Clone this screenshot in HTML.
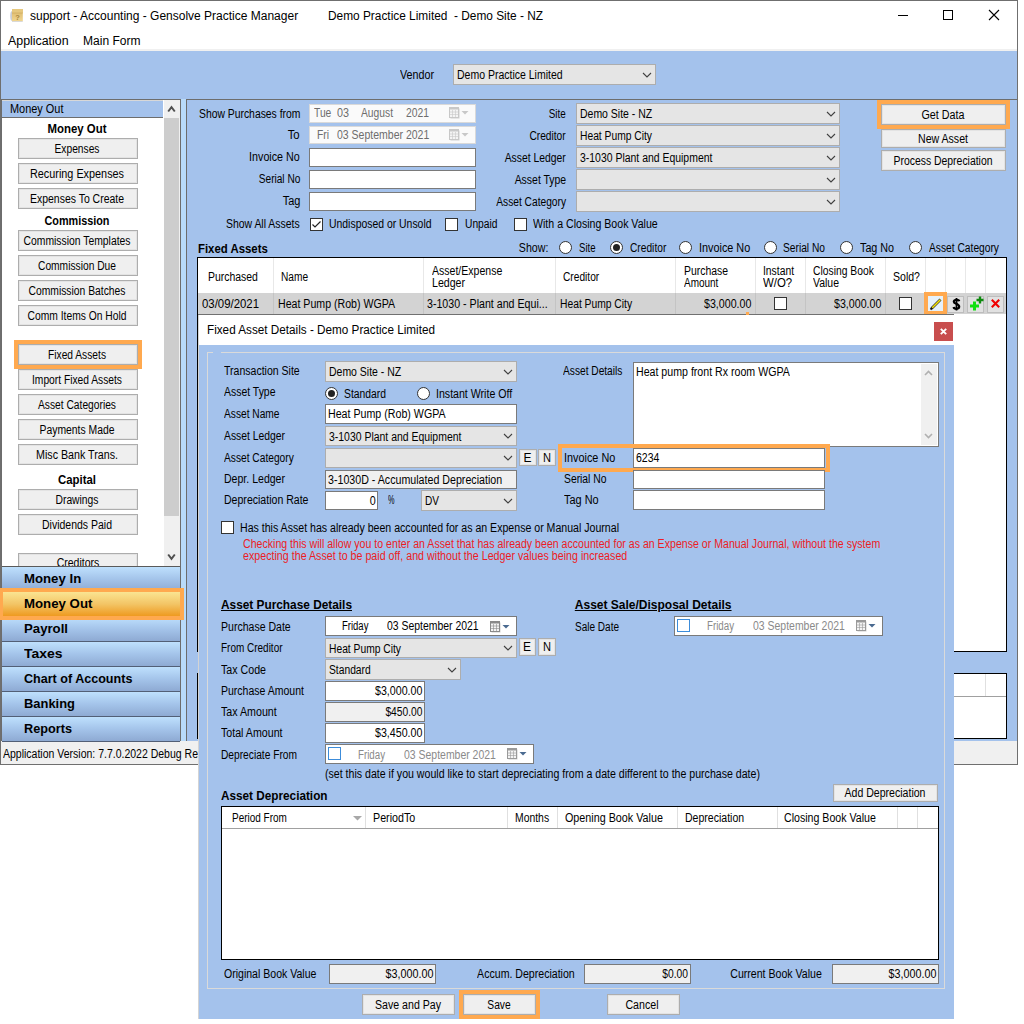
<!DOCTYPE html><html><head><meta charset="utf-8"><style>
*{box-sizing:border-box;margin:0;padding:0}
html,body{width:1024px;height:1024px;overflow:hidden;background:#fff}
body{position:relative;font-family:"Liberation Sans",sans-serif;font-size:12px;color:#000}
.a{position:absolute}
.t{position:absolute;white-space:pre}
svg{overflow:visible}
</style></head><body>
<div class="a" style="left:0px;top:0px;width:1018px;height:765px;background:#fff;border:1px solid #6F6F6F;"></div>
<svg class="a" style="left:9px;top:8px" width="16" height="16" viewBox="0 0 16 16"><defs><linearGradient id="gb" x1="0" y1="0" x2="0" y2="1"><stop offset="0" stop-color="#D9B464"/><stop offset="1" stop-color="#F0D590"/></linearGradient></defs><ellipse cx="2.8" cy="8" rx="1.6" ry="4.8" fill="#C9CDD5"/><rect x="3" y="1" width="10.8" height="12" fill="url(#gb)"/><rect x="3" y="1" width="10.8" height="4" fill="#E6C87E"/><path d="M3 5 H13.8" stroke="#C9A55A" stroke-width="0.6"/><text x="8.6" y="11.8" font-size="7.5" font-weight="bold" text-anchor="middle" fill="#A88840" font-family="Liberation Sans">?</text><rect x="3" y="13" width="10.8" height="0.8" fill="#D0D0D0"/></svg>
<div class="t" style="top:7.50px;height:16px;line-height:16px;font-size:12px;color:#000;left:30px;transform-origin:0 50%;">support - Accounting - Gensolve Practice Manager</div>
<div class="t" style="top:7.50px;height:16px;line-height:16px;font-size:12px;color:#000;left:328px;transform-origin:0 50%;transform:scaleX(0.9890);">Demo Practice Limited  - Demo Site - NZ</div>
<div class="a" style="left:898px;top:15px;width:10px;height:1px;background:#000;"></div>
<div class="a" style="left:943px;top:10px;width:10px;height:10px;border:1px solid #000;"></div>
<svg class="a" style="left:989px;top:10px" width="10" height="10" viewBox="0 0 10 10"><path d="M0 0 L10 10 M10 0 L0 10" stroke="#000" stroke-width="1.1"/></svg>
<div class="t" style="top:32.50px;height:16px;line-height:16px;font-size:12px;color:#000;left:8px;transform-origin:0 50%;transform:scaleX(1.0320);">Application</div>
<div class="t" style="top:32.50px;height:16px;line-height:16px;font-size:12px;color:#000;left:83px;transform-origin:0 50%;transform:scaleX(1.0027);">Main Form</div>
<div class="a" style="left:1px;top:49px;width:1016px;height:2px;background:#F0F0F0;"></div>
<div class="a" style="left:1px;top:51px;width:1016px;height:690px;background:#A4C2EC;"></div>
<div class="a" style="left:1px;top:741px;width:1016px;height:23px;background:#F0F0F0;"></div>
<div class="t" style="top:745.50px;height:16px;line-height:16px;font-size:12px;color:#000;left:3px;transform-origin:0 50%;transform:scaleX(0.8750);">Application Version: 7.7.0.2022 Debug Release</div>
<div class="a" style="left:0px;top:764px;width:1018px;height:1px;background:#6F6F6F;"></div>
<div class="t" style="top:66.50px;height:16px;line-height:16px;font-size:12px;color:#000;right:590px;transform-origin:100% 50%;transform:scaleX(0.8936);">Vendor</div>
<div class="a" style="left:453px;top:64px;width:203px;height:21px;background:#E5E5E5;border:1px solid #ADADAD;"></div>
<div class="t" style="top:67.00px;height:16px;line-height:16px;font-size:12px;color:#000;left:457.4px;transform-origin:0 50%;transform:scaleX(0.8750);">Demo Practice Limited</div>
<svg class="a" style="left:642.0px;top:71.5px" width="10" height="6" viewBox="0 0 10 6"><path d="M1 1 L5.0 5 L9 1" fill="none" stroke="#404040" stroke-width="1.1"/></svg>
<div class="a" style="left:1px;top:99px;width:180px;height:468px;background:#6D6D6D;"></div>
<div class="a" style="left:2px;top:100px;width:178px;height:466px;background:#fff;"></div>
<div class="a" style="left:2px;top:100px;width:161px;height:1px;background:#D8D8D8;"></div>
<div class="a" style="left:2px;top:101px;width:161px;height:16px;background:#A4C2EC;"></div>
<div class="a" style="left:2px;top:117px;width:161px;height:1px;background:#6D6D6D;"></div>
<div class="t" style="top:100.50px;height:16px;line-height:16px;font-size:12px;color:#000;left:9.5px;transform-origin:0 50%;transform:scaleX(0.9114);">Money Out</div>
<div class="a" style="left:163px;top:100px;width:17px;height:466px;background:#F0F0F0;"></div>
<div class="a" style="left:164px;top:118px;width:15px;height:398px;background:#CDCDCD;"></div>
<div class="a" style="left:163px;top:100px;width:1px;height:466px;background:#fff;"></div>
<svg class="a" style="left:167px;top:105px" width="9" height="8" viewBox="0 0 9 8"><path d="M1.2 6.5 L4.5 2.2 L7.8 6.5" fill="none" stroke="#505050" stroke-width="2"/></svg>
<svg class="a" style="left:167px;top:553px" width="9" height="8" viewBox="0 0 9 8"><path d="M1.2 1.5 L4.5 5.8 L7.8 1.5" fill="none" stroke="#505050" stroke-width="2"/></svg>
<div class="t" style="top:121.00px;height:16px;line-height:16px;font-size:12px;color:#000;font-weight:bold;left:-223px;width:600px;text-align:center;transform-origin:50% 50%;transform:scaleX(0.9516);">Money Out</div>
<div class="a" style="left:18px;top:138px;width:120px;height:21px;background:#EFEFEF;border:1px solid #ADADAD;box-shadow:inset 0 0 0 1px #E3E3E3;"></div>
<div class="t" style="top:140.50px;height:16px;line-height:16px;font-size:12px;color:#000;left:-223px;width:600px;text-align:center;transform-origin:50% 50%;transform:scaleX(0.8538);">Expenses</div>
<div class="a" style="left:18px;top:163px;width:120px;height:21px;background:#EFEFEF;border:1px solid #ADADAD;box-shadow:inset 0 0 0 1px #E3E3E3;"></div>
<div class="t" style="top:165.50px;height:16px;line-height:16px;font-size:12px;color:#000;left:-223px;width:600px;text-align:center;transform-origin:50% 50%;transform:scaleX(0.9033);">Recuring Expenses</div>
<div class="a" style="left:18px;top:188px;width:120px;height:21px;background:#EFEFEF;border:1px solid #ADADAD;box-shadow:inset 0 0 0 1px #E3E3E3;"></div>
<div class="t" style="top:190.50px;height:16px;line-height:16px;font-size:12px;color:#000;left:-223px;width:600px;text-align:center;transform-origin:50% 50%;transform:scaleX(0.8716);">Expenses To Create</div>
<div class="t" style="top:213.00px;height:16px;line-height:16px;font-size:12px;color:#000;font-weight:bold;left:-223px;width:600px;text-align:center;transform-origin:50% 50%;transform:scaleX(0.9026);">Commission</div>
<div class="a" style="left:18px;top:230px;width:120px;height:21px;background:#EFEFEF;border:1px solid #ADADAD;box-shadow:inset 0 0 0 1px #E3E3E3;"></div>
<div class="t" style="top:232.50px;height:16px;line-height:16px;font-size:12px;color:#000;left:-223px;width:600px;text-align:center;transform-origin:50% 50%;transform:scaleX(0.8641);">Commission Templates</div>
<div class="a" style="left:18px;top:255px;width:120px;height:21px;background:#EFEFEF;border:1px solid #ADADAD;box-shadow:inset 0 0 0 1px #E3E3E3;"></div>
<div class="t" style="top:257.50px;height:16px;line-height:16px;font-size:12px;color:#000;left:-223px;width:600px;text-align:center;transform-origin:50% 50%;transform:scaleX(0.8538);">Commission Due</div>
<div class="a" style="left:18px;top:280px;width:120px;height:21px;background:#EFEFEF;border:1px solid #ADADAD;box-shadow:inset 0 0 0 1px #E3E3E3;"></div>
<div class="t" style="top:282.50px;height:16px;line-height:16px;font-size:12px;color:#000;left:-223px;width:600px;text-align:center;transform-origin:50% 50%;transform:scaleX(0.8605);">Commission Batches</div>
<div class="a" style="left:18px;top:305px;width:120px;height:21px;background:#EFEFEF;border:1px solid #ADADAD;box-shadow:inset 0 0 0 1px #E3E3E3;"></div>
<div class="t" style="top:307.50px;height:16px;line-height:16px;font-size:12px;color:#000;left:-223px;width:600px;text-align:center;transform-origin:50% 50%;transform:scaleX(0.8582);">Comm Items On Hold</div>
<div class="a" style="left:18px;top:344px;width:120px;height:21px;background:#EFEFEF;border:1px solid #ADADAD;box-shadow:inset 0 0 0 1px #E3E3E3;"></div>
<div class="t" style="top:346.50px;height:16px;line-height:16px;font-size:12px;color:#000;left:-223px;width:600px;text-align:center;transform-origin:50% 50%;transform:scaleX(0.8525);">Fixed Assets</div>
<div class="a" style="left:18px;top:369px;width:120px;height:21px;background:#EFEFEF;border:1px solid #ADADAD;box-shadow:inset 0 0 0 1px #E3E3E3;"></div>
<div class="t" style="top:371.50px;height:16px;line-height:16px;font-size:12px;color:#000;left:-223px;width:600px;text-align:center;transform-origin:50% 50%;transform:scaleX(0.8541);">Import Fixed Assets</div>
<div class="a" style="left:18px;top:394px;width:120px;height:21px;background:#EFEFEF;border:1px solid #ADADAD;box-shadow:inset 0 0 0 1px #E3E3E3;"></div>
<div class="t" style="top:396.50px;height:16px;line-height:16px;font-size:12px;color:#000;left:-223px;width:600px;text-align:center;transform-origin:50% 50%;transform:scaleX(0.8535);">Asset Categories</div>
<div class="a" style="left:18px;top:419px;width:120px;height:21px;background:#EFEFEF;border:1px solid #ADADAD;box-shadow:inset 0 0 0 1px #E3E3E3;"></div>
<div class="t" style="top:421.50px;height:16px;line-height:16px;font-size:12px;color:#000;left:-223px;width:600px;text-align:center;transform-origin:50% 50%;transform:scaleX(0.8649);">Payments Made</div>
<div class="a" style="left:18px;top:444px;width:120px;height:21px;background:#EFEFEF;border:1px solid #ADADAD;box-shadow:inset 0 0 0 1px #E3E3E3;"></div>
<div class="t" style="top:446.50px;height:16px;line-height:16px;font-size:12px;color:#000;left:-223px;width:600px;text-align:center;transform-origin:50% 50%;transform:scaleX(0.8910);">Misc Bank Trans.</div>
<div class="a" style="left:14px;top:340px;width:128px;height:29px;border:4px solid #FFA94F;"></div>
<div class="t" style="top:471.50px;height:16px;line-height:16px;font-size:12px;color:#000;font-weight:bold;left:-223px;width:600px;text-align:center;transform-origin:50% 50%;transform:scaleX(0.9496);">Capital</div>
<div class="a" style="left:18px;top:489px;width:120px;height:21px;background:#EFEFEF;border:1px solid #ADADAD;box-shadow:inset 0 0 0 1px #E3E3E3;"></div>
<div class="t" style="top:491.50px;height:16px;line-height:16px;font-size:12px;color:#000;left:-223px;width:600px;text-align:center;transform-origin:50% 50%;transform:scaleX(0.8597);">Drawings</div>
<div class="a" style="left:18px;top:514px;width:120px;height:21px;background:#EFEFEF;border:1px solid #ADADAD;box-shadow:inset 0 0 0 1px #E3E3E3;"></div>
<div class="t" style="top:516.50px;height:16px;line-height:16px;font-size:12px;color:#000;left:-223px;width:600px;text-align:center;transform-origin:50% 50%;transform:scaleX(0.8745);">Dividends Paid</div>
<div class="a" style="left:2px;top:540px;width:161px;height:26px;overflow:hidden">
<div class="a" style="left:16px;top:13px;width:120px;height:21px;background:#EFEFEF;border:1px solid #ADADAD;box-shadow:inset 0 0 0 1px #E3E3E3;"></div>
<div class="t" style="left:16px;top:15px;width:120px;text-align:center;height:16px;line-height:16px;transform:scaleX(0.875)">Creditors</div>
</div>
<div class="a" style="left:1px;top:566px;width:180px;height:1px;background:#5A5A5A;"></div>
<div class="a" style="left:2px;top:567px;width:178px;height:24px;background:linear-gradient(#BEE0FD,#A4C4EA 50%,#8EAAD3);"></div>
<div class="a" style="left:2px;top:591px;width:178px;height:1px;background:#525F76;"></div>
<div class="t" style="top:570.50px;height:16px;line-height:16px;font-size:13.5px;color:#000;font-weight:bold;left:24px;transform-origin:0 50%;transform:scaleX(0.9775);">Money In</div>
<div class="a" style="left:2px;top:592px;width:178px;height:24px;background:linear-gradient(#FAE492,#F3C566 50%,#EE9A20);"></div>
<div class="a" style="left:2px;top:616px;width:178px;height:1px;background:#525F76;"></div>
<div class="t" style="top:595.50px;height:16px;line-height:16px;font-size:13.5px;color:#000;font-weight:bold;left:24px;transform-origin:0 50%;transform:scaleX(0.9806);">Money Out</div>
<div class="a" style="left:2px;top:617px;width:178px;height:24px;background:linear-gradient(#BEE0FD,#A4C4EA 50%,#8EAAD3);"></div>
<div class="a" style="left:2px;top:641px;width:178px;height:1px;background:#525F76;"></div>
<div class="t" style="top:620.50px;height:16px;line-height:16px;font-size:13.5px;color:#000;font-weight:bold;left:24px;transform-origin:0 50%;transform:scaleX(0.9771);">Payroll</div>
<div class="a" style="left:2px;top:642px;width:178px;height:24px;background:linear-gradient(#BEE0FD,#A4C4EA 50%,#8EAAD3);"></div>
<div class="a" style="left:2px;top:666px;width:178px;height:1px;background:#525F76;"></div>
<div class="t" style="top:645.50px;height:16px;line-height:16px;font-size:13.5px;color:#000;font-weight:bold;left:24px;transform-origin:0 50%;transform:scaleX(1.0327);">Taxes</div>
<div class="a" style="left:2px;top:667px;width:178px;height:24px;background:linear-gradient(#BEE0FD,#A4C4EA 50%,#8EAAD3);"></div>
<div class="a" style="left:2px;top:691px;width:178px;height:1px;background:#525F76;"></div>
<div class="t" style="top:670.50px;height:16px;line-height:16px;font-size:13.5px;color:#000;font-weight:bold;left:24px;transform-origin:0 50%;transform:scaleX(0.9303);">Chart of Accounts</div>
<div class="a" style="left:2px;top:692px;width:178px;height:24px;background:linear-gradient(#BEE0FD,#A4C4EA 50%,#8EAAD3);"></div>
<div class="a" style="left:2px;top:716px;width:178px;height:1px;background:#525F76;"></div>
<div class="t" style="top:695.50px;height:16px;line-height:16px;font-size:13.5px;color:#000;font-weight:bold;left:24px;transform-origin:0 50%;transform:scaleX(0.9575);">Banking</div>
<div class="a" style="left:2px;top:717px;width:178px;height:24px;background:linear-gradient(#BEE0FD,#A4C4EA 50%,#8EAAD3);"></div>
<div class="a" style="left:2px;top:741px;width:178px;height:1px;background:#525F76;"></div>
<div class="t" style="top:720.50px;height:16px;line-height:16px;font-size:13.5px;color:#000;font-weight:bold;left:24px;transform-origin:0 50%;transform:scaleX(0.9409);">Reports</div>
<div class="a" style="left:180px;top:99px;width:1px;height:642px;background:#6D6D6D;"></div>
<div class="a" style="left:1px;top:99px;width:1px;height:642px;background:#6D6D6D;"></div>
<div class="a" style="left:181px;top:99px;width:5px;height:642px;background:#B9DBFA;"></div>
<div class="a" style="left:186px;top:99px;width:1px;height:642px;background:#6D6D6D;"></div>
<div class="a" style="left:186px;top:99px;width:831px;height:1px;background:#6D6D6D;"></div>
<div class="a" style="left:0px;top:588px;width:184px;height:32px;border:4px solid #FFA94F;border-left-width:3px;"></div>
<div class="t" style="top:105.50px;height:16px;line-height:16px;font-size:12px;color:#000;right:724px;transform-origin:100% 50%;transform:scaleX(0.8638);">Show Purchases from</div>
<div class="t" style="top:126.50px;height:16px;line-height:16px;font-size:12px;color:#000;right:724px;transform-origin:100% 50%;transform:scaleX(0.9458);">To</div>
<div class="t" style="top:148.50px;height:16px;line-height:16px;font-size:12px;color:#000;right:724px;transform-origin:100% 50%;transform:scaleX(0.8924);">Invoice No</div>
<div class="t" style="top:170.50px;height:16px;line-height:16px;font-size:12px;color:#000;right:724px;transform-origin:100% 50%;transform:scaleX(0.8428);">Serial No</div>
<div class="t" style="top:192.50px;height:16px;line-height:16px;font-size:12px;color:#000;right:724px;transform-origin:100% 50%;transform:scaleX(0.9143);">Tag</div>
<div class="t" style="top:215.50px;height:16px;line-height:16px;font-size:12px;color:#000;right:724px;transform-origin:100% 50%;transform:scaleX(0.8711);">Show All Assets</div>
<div class="a" style="left:309px;top:104px;width:167px;height:19px;background:#FAFAFA;border:1px solid #D9D9D9;"></div>
<div class="t" style="top:104.50px;height:16px;line-height:16px;font-size:12px;color:#6D6D6D;left:314px;transform-origin:0 50%;transform:scaleX(0.8550);">Tue</div>
<div class="t" style="top:104.50px;height:16px;line-height:16px;font-size:12px;color:#6D6D6D;left:337px;transform-origin:0 50%;transform:scaleX(0.8982);">03</div>
<div class="t" style="top:104.50px;height:16px;line-height:16px;font-size:12px;color:#6D6D6D;left:361px;transform-origin:0 50%;transform:scaleX(0.8565);">August</div>
<div class="t" style="top:104.50px;height:16px;line-height:16px;font-size:12px;color:#6D6D6D;left:406px;transform-origin:0 50%;transform:scaleX(0.8613);">2021</div>
<svg class="a" style="left:449px;top:107px" width="22" height="12" viewBox="0 0 22 12"><rect x="1.5" y="1.5" width="9" height="10" fill="#D0D0D0"/><rect x="0.5" y="0.5" width="9" height="10" fill="#F4F4F4" stroke="#C8C8C8"/><rect x="0.5" y="0.5" width="9" height="2" fill="#C8C8C8"/><path d="M0.5 5 H9.5 M0.5 7.5 H9.5 M3.5 3 V10.5 M6.5 3 V10.5" stroke="#C8C8C8" stroke-width="0.6"/><path d="M12.5 4 L19.5 4 L16 7.5 Z" fill="#C8C8C8"/></svg>
<div class="a" style="left:309px;top:126px;width:167px;height:18px;background:#FAFAFA;border:1px solid #D9D9D9;"></div>
<div class="t" style="top:126.50px;height:16px;line-height:16px;font-size:12px;color:#6D6D6D;left:317px;transform-origin:0 50%;transform:scaleX(0.8571);">Fri</div>
<div class="t" style="top:126.50px;height:16px;line-height:16px;font-size:12px;color:#6D6D6D;left:337px;transform-origin:0 50%;transform:scaleX(0.8755);">03 September 2021</div>
<svg class="a" style="left:449px;top:129px" width="22" height="12" viewBox="0 0 22 12"><rect x="1.5" y="1.5" width="9" height="10" fill="#D0D0D0"/><rect x="0.5" y="0.5" width="9" height="10" fill="#F4F4F4" stroke="#C8C8C8"/><rect x="0.5" y="0.5" width="9" height="2" fill="#C8C8C8"/><path d="M0.5 5 H9.5 M0.5 7.5 H9.5 M3.5 3 V10.5 M6.5 3 V10.5" stroke="#C8C8C8" stroke-width="0.6"/><path d="M12.5 4 L19.5 4 L16 7.5 Z" fill="#C8C8C8"/></svg>
<div class="a" style="left:309px;top:148px;width:167px;height:19px;background:#fff;border:1px solid #7A7A7A;"></div>
<div class="a" style="left:309px;top:170px;width:167px;height:19px;background:#fff;border:1px solid #7A7A7A;"></div>
<div class="a" style="left:309px;top:192px;width:167px;height:19px;background:#fff;border:1px solid #7A7A7A;"></div>
<div class="a" style="left:310px;top:218px;width:13px;height:13px;background:#fff;border:1px solid #333;"></div>
<svg class="a" style="left:310px;top:218px" width="13" height="13" viewBox="0 0 13 13"><path d="M2.5 6.5 L5 9 L10.5 3.5" fill="none" stroke="#222" stroke-width="1.2"/></svg>
<div class="t" style="top:215.50px;height:16px;line-height:16px;font-size:12px;color:#000;left:328.7px;transform-origin:0 50%;transform:scaleX(0.8681);">Undisposed or Unsold</div>
<div class="a" style="left:445px;top:218px;width:13px;height:13px;background:#fff;border:1px solid #333;"></div>
<div class="t" style="top:215.50px;height:16px;line-height:16px;font-size:12px;color:#000;left:464.6px;transform-origin:0 50%;transform:scaleX(0.8546);">Unpaid</div>
<div class="a" style="left:514px;top:218px;width:13px;height:13px;background:#fff;border:1px solid #333;"></div>
<div class="t" style="top:215.50px;height:16px;line-height:16px;font-size:12px;color:#000;left:533.2px;transform-origin:0 50%;transform:scaleX(0.8832);">With a Closing Book Value</div>
<div class="t" style="top:105.50px;height:16px;line-height:16px;font-size:12px;color:#000;right:458px;transform-origin:100% 50%;transform:scaleX(0.8218);">Site</div>
<div class="t" style="top:127.50px;height:16px;line-height:16px;font-size:12px;color:#000;right:458px;transform-origin:100% 50%;transform:scaleX(0.8504);">Creditor</div>
<div class="t" style="top:149.50px;height:16px;line-height:16px;font-size:12px;color:#000;right:458px;transform-origin:100% 50%;transform:scaleX(0.8626);">Asset Ledger</div>
<div class="t" style="top:171.50px;height:16px;line-height:16px;font-size:12px;color:#000;right:458px;transform-origin:100% 50%;transform:scaleX(0.8706);">Asset Type</div>
<div class="t" style="top:193.50px;height:16px;line-height:16px;font-size:12px;color:#000;right:458px;transform-origin:100% 50%;transform:scaleX(0.8507);">Asset Category</div>
<div class="a" style="left:576px;top:103px;width:264px;height:21px;background:#E5E5E5;border:1px solid #ADADAD;"></div>
<div class="t" style="top:106.00px;height:16px;line-height:16px;font-size:12px;color:#000;left:580.4px;transform-origin:0 50%;transform:scaleX(0.8732);">Demo Site - NZ</div>
<svg class="a" style="left:826.0px;top:110.5px" width="10" height="6" viewBox="0 0 10 6"><path d="M1 1 L5.0 5 L9 1" fill="none" stroke="#404040" stroke-width="1.1"/></svg>
<div class="a" style="left:576px;top:125px;width:264px;height:21px;background:#E5E5E5;border:1px solid #ADADAD;"></div>
<div class="t" style="top:128.00px;height:16px;line-height:16px;font-size:12px;color:#000;left:580.4px;transform-origin:0 50%;transform:scaleX(0.8568);">Heat Pump City</div>
<svg class="a" style="left:826.0px;top:132.5px" width="10" height="6" viewBox="0 0 10 6"><path d="M1 1 L5.0 5 L9 1" fill="none" stroke="#404040" stroke-width="1.1"/></svg>
<div class="a" style="left:576px;top:147px;width:264px;height:21px;background:#E5E5E5;border:1px solid #ADADAD;"></div>
<div class="t" style="top:150.00px;height:16px;line-height:16px;font-size:12px;color:#000;left:580.4px;transform-origin:0 50%;transform:scaleX(0.8704);">3-1030 Plant and Equipment</div>
<svg class="a" style="left:826.0px;top:154.5px" width="10" height="6" viewBox="0 0 10 6"><path d="M1 1 L5.0 5 L9 1" fill="none" stroke="#404040" stroke-width="1.1"/></svg>
<div class="a" style="left:576px;top:169px;width:264px;height:21px;background:#E5E5E5;border:1px solid #ADADAD;"></div>
<svg class="a" style="left:826.0px;top:176.5px" width="10" height="6" viewBox="0 0 10 6"><path d="M1 1 L5.0 5 L9 1" fill="none" stroke="#404040" stroke-width="1.1"/></svg>
<div class="a" style="left:576px;top:191px;width:264px;height:21px;background:#E5E5E5;border:1px solid #ADADAD;"></div>
<svg class="a" style="left:826.0px;top:198.5px" width="10" height="6" viewBox="0 0 10 6"><path d="M1 1 L5.0 5 L9 1" fill="none" stroke="#404040" stroke-width="1.1"/></svg>
<div class="a" style="left:881px;top:104px;width:125px;height:21px;background:#EFEFEF;border:1px solid #ADADAD;box-shadow:inset 0 0 0 1px #E3E3E3;"></div>
<div class="t" style="top:106.50px;height:16px;line-height:16px;font-size:12px;color:#000;left:643.0px;width:600px;text-align:center;transform-origin:50% 50%;transform:scaleX(0.8953);">Get Data</div>
<div class="a" style="left:877px;top:100px;width:133px;height:29px;border:4px solid #FFA94F;"></div>
<div class="a" style="left:881px;top:129px;width:125px;height:19px;background:#EFEFEF;border:1px solid #ADADAD;box-shadow:inset 0 0 0 1px #E3E3E3;"></div>
<div class="t" style="top:130.50px;height:16px;line-height:16px;font-size:12px;color:#000;left:643.0px;width:600px;text-align:center;transform-origin:50% 50%;transform:scaleX(0.8818);">New Asset</div>
<div class="a" style="left:881px;top:150px;width:125px;height:21px;background:#EFEFEF;border:1px solid #ADADAD;box-shadow:inset 0 0 0 1px #E3E3E3;"></div>
<div class="t" style="top:152.50px;height:16px;line-height:16px;font-size:12px;color:#000;left:643.0px;width:600px;text-align:center;transform-origin:50% 50%;transform:scaleX(0.8679);">Process Depreciation</div>
<div class="t" style="top:240.50px;height:16px;line-height:16px;font-size:12px;color:#000;font-weight:bold;left:197.7px;transform-origin:0 50%;transform:scaleX(0.9485);">Fixed Assets</div>
<div class="t" style="top:240.00px;height:16px;line-height:16px;font-size:12px;color:#000;right:475.29999999999995px;transform-origin:100% 50%;transform:scaleX(0.8843);">Show:</div>
<svg class="a" style="left:559px;top:241px" width="13" height="13" viewBox="0 0 13 13"><circle cx="6.5" cy="6.5" r="6" fill="#fff" stroke="#333" stroke-width="1"/></svg>
<div class="t" style="top:240.00px;height:16px;line-height:16px;font-size:12px;color:#000;left:578.5px;transform-origin:0 50%;transform:scaleX(0.7976);">Site</div>
<svg class="a" style="left:610px;top:241px" width="13" height="13" viewBox="0 0 13 13"><circle cx="6.5" cy="6.5" r="6" fill="#fff" stroke="#333" stroke-width="1"/><circle cx="6.5" cy="6.5" r="3.5" fill="#222"/></svg>
<div class="t" style="top:240.00px;height:16px;line-height:16px;font-size:12px;color:#000;left:629.5px;transform-origin:0 50%;transform:scaleX(0.8504);">Creditor</div>
<svg class="a" style="left:679px;top:241px" width="13" height="13" viewBox="0 0 13 13"><circle cx="6.5" cy="6.5" r="6" fill="#fff" stroke="#333" stroke-width="1"/></svg>
<div class="t" style="top:240.00px;height:16px;line-height:16px;font-size:12px;color:#000;left:698.5px;transform-origin:0 50%;transform:scaleX(0.9029);">Invoice No</div>
<svg class="a" style="left:763.6px;top:241px" width="13" height="13" viewBox="0 0 13 13"><circle cx="6.5" cy="6.5" r="6" fill="#fff" stroke="#333" stroke-width="1"/></svg>
<div class="t" style="top:240.00px;height:16px;line-height:16px;font-size:12px;color:#000;left:783.1px;transform-origin:0 50%;transform:scaleX(0.8509);">Serial No</div>
<svg class="a" style="left:840px;top:241px" width="13" height="13" viewBox="0 0 13 13"><circle cx="6.5" cy="6.5" r="6" fill="#fff" stroke="#333" stroke-width="1"/></svg>
<div class="t" style="top:240.00px;height:16px;line-height:16px;font-size:12px;color:#000;left:859.5px;transform-origin:0 50%;transform:scaleX(0.8966);">Tag No</div>
<svg class="a" style="left:909px;top:241px" width="13" height="13" viewBox="0 0 13 13"><circle cx="6.5" cy="6.5" r="6" fill="#fff" stroke="#333" stroke-width="1"/></svg>
<div class="t" style="top:240.00px;height:16px;line-height:16px;font-size:12px;color:#000;left:928.5px;transform-origin:0 50%;transform:scaleX(0.8532);">Asset Category</div>
<div class="a" style="left:197px;top:257px;width:810px;height:395px;background:#fff;border:1px solid #000;"></div>
<div class="a" style="left:197px;top:673px;width:810px;height:66px;background:#fff;border:1px solid #000;"></div>
<div class="a" style="left:198px;top:696px;width:808px;height:1px;background:#A0A0A0;"></div>
<div class="a" style="left:985px;top:674px;width:1px;height:22px;background:#E0E0E0;"></div>
<div class="a" style="left:273px;top:258px;width:1px;height:35px;background:#E8E8E8;"></div>
<div class="a" style="left:423px;top:258px;width:1px;height:35px;background:#E8E8E8;"></div>
<div class="a" style="left:555px;top:258px;width:1px;height:35px;background:#E8E8E8;"></div>
<div class="a" style="left:675px;top:258px;width:1px;height:35px;background:#E8E8E8;"></div>
<div class="a" style="left:755px;top:258px;width:1px;height:35px;background:#E8E8E8;"></div>
<div class="a" style="left:805px;top:258px;width:1px;height:35px;background:#E8E8E8;"></div>
<div class="a" style="left:885px;top:258px;width:1px;height:35px;background:#E8E8E8;"></div>
<div class="a" style="left:925px;top:258px;width:1px;height:35px;background:#E8E8E8;"></div>
<div class="a" style="left:945px;top:258px;width:1px;height:35px;background:#E8E8E8;"></div>
<div class="a" style="left:965px;top:258px;width:1px;height:35px;background:#E8E8E8;"></div>
<div class="a" style="left:985px;top:258px;width:1px;height:35px;background:#E8E8E8;"></div>
<div class="t" style="top:268.50px;height:16px;line-height:16px;font-size:12px;color:#000;left:207.6px;transform-origin:0 50%;transform:scaleX(0.8697);">Purchased</div>
<div class="t" style="top:268.50px;height:16px;line-height:16px;font-size:12px;color:#000;left:281.4px;transform-origin:0 50%;transform:scaleX(0.8465);">Name</div>
<div class="t" style="top:262.50px;height:16px;line-height:16px;font-size:12px;color:#000;left:431.6px;transform-origin:0 50%;transform:scaleX(0.8782);">Asset/Expense</div>
<div class="t" style="top:275.00px;height:16px;line-height:16px;font-size:12px;color:#000;left:431.6px;transform-origin:0 50%;transform:scaleX(0.8829);">Ledger</div>
<div class="t" style="top:268.50px;height:16px;line-height:16px;font-size:12px;color:#000;left:563px;transform-origin:0 50%;transform:scaleX(0.8480);">Creditor</div>
<div class="t" style="top:262.50px;height:16px;line-height:16px;font-size:12px;color:#000;left:683.6px;transform-origin:0 50%;transform:scaleX(0.8678);">Purchase</div>
<div class="t" style="top:275.00px;height:16px;line-height:16px;font-size:12px;color:#000;left:683.6px;transform-origin:0 50%;transform:scaleX(0.8317);">Amount</div>
<div class="t" style="top:262.50px;height:16px;line-height:16px;font-size:12px;color:#000;left:763.4px;transform-origin:0 50%;transform:scaleX(0.8604);">Instant</div>
<div class="t" style="top:275.00px;height:16px;line-height:16px;font-size:12px;color:#000;left:763.4px;transform-origin:0 50%;transform:scaleX(0.9520);">W/O?</div>
<div class="t" style="top:262.50px;height:16px;line-height:16px;font-size:12px;color:#000;left:812.7px;transform-origin:0 50%;transform:scaleX(0.8597);">Closing Book</div>
<div class="t" style="top:275.00px;height:16px;line-height:16px;font-size:12px;color:#000;left:812.7px;transform-origin:0 50%;transform:scaleX(0.8721);">Value</div>
<div class="t" style="top:268.50px;height:16px;line-height:16px;font-size:12px;color:#000;left:893px;transform-origin:0 50%;transform:scaleX(0.8794);">Sold?</div>
<div class="a" style="left:198px;top:293px;width:808px;height:21px;background:#D3D3D3;"></div>
<div class="a" style="left:273px;top:293px;width:1px;height:21px;background:#C4C4C4;"></div>
<div class="a" style="left:423px;top:293px;width:1px;height:21px;background:#C4C4C4;"></div>
<div class="a" style="left:555px;top:293px;width:1px;height:21px;background:#C4C4C4;"></div>
<div class="a" style="left:675px;top:293px;width:1px;height:21px;background:#C4C4C4;"></div>
<div class="a" style="left:755px;top:293px;width:1px;height:21px;background:#C4C4C4;"></div>
<div class="a" style="left:805px;top:293px;width:1px;height:21px;background:#C4C4C4;"></div>
<div class="a" style="left:885px;top:293px;width:1px;height:21px;background:#C4C4C4;"></div>
<div class="a" style="left:925px;top:293px;width:1px;height:21px;background:#C4C4C4;"></div>
<div class="t" style="top:295.50px;height:16px;line-height:16px;font-size:12px;color:#000;left:202.3px;transform-origin:0 50%;transform:scaleX(0.9490);">03/09/2021</div>
<div class="t" style="top:295.50px;height:16px;line-height:16px;font-size:12px;color:#000;left:277.6px;transform-origin:0 50%;transform:scaleX(0.8839);">Heat Pump (Rob) WGPA</div>
<div class="t" style="top:295.50px;height:16px;line-height:16px;font-size:12px;color:#000;left:427px;transform-origin:0 50%;transform:scaleX(0.8862);">3-1030 - Plant and Equi...</div>
<div class="t" style="top:295.50px;height:16px;line-height:16px;font-size:12px;color:#000;left:559.5px;transform-origin:0 50%;transform:scaleX(0.8580);">Heat Pump City</div>
<div class="t" style="top:295.50px;height:16px;line-height:16px;font-size:12px;color:#000;right:272.5px;transform-origin:100% 50%;transform:scaleX(0.8878);">$3,000.00</div>
<div class="t" style="top:295.50px;height:16px;line-height:16px;font-size:12px;color:#000;right:143px;transform-origin:100% 50%;transform:scaleX(0.8878);">$3,000.00</div>
<div class="a" style="left:774px;top:297px;width:13px;height:13px;background:#fff;border:1px solid #333;"></div>
<div class="a" style="left:899px;top:297px;width:13px;height:13px;background:#fff;border:1px solid #333;"></div>
<div class="a" style="left:925px;top:293px;width:21px;height:21px;background:#E5F1FB;"></div>
<svg class="a" style="left:929px;top:297px" width="14" height="14" viewBox="0 0 14 14"><path d="M2.5 11.5 L11.5 2.5" stroke="#3A3A3A" stroke-width="2.8"/><path d="M3 11 L11.3 2.7" stroke="#F5E400" stroke-width="1.5"/><path d="M1.5 12.5 L3.2 10.8" stroke="#111" stroke-width="1.8"/></svg>
<div class="a" style="left:924px;top:292px;width:23px;height:23px;border:4px solid #FFA94F;"></div>
<div class="a" style="left:947px;top:296px;width:17px;height:17px;background:#E1E1E1;border:1px solid #BDBDBD;"></div>
<div class="a" style="left:967px;top:296px;width:17px;height:17px;background:#E1E1E1;border:1px solid #BDBDBD;"></div>
<div class="a" style="left:987px;top:296px;width:17px;height:17px;background:#E1E1E1;border:1px solid #BDBDBD;"></div>
<svg class="a" style="left:952px;top:298px" width="9" height="13" viewBox="0 0 9 13"><path d="M7.2 3.2 C7 2.2 6 1.8 4.5 1.8 C2.8 1.8 1.8 2.6 1.8 3.8 C1.8 6 7.2 5.6 7.2 8.6 C7.2 10 6 10.8 4.5 10.8 C2.8 10.8 1.8 10 1.6 9" fill="none" stroke="#000" stroke-width="2.2"/><path d="M4.5 0 V12.5" stroke="#000" stroke-width="1.8"/></svg>
<svg class="a" style="left:969px;top:296px" width="16" height="15" viewBox="0 0 16 15"><path d="M5.5 5.5 V14.5 M1 10 H10" stroke="#11E011" stroke-width="3"/><path d="M11 0.5 V7.5 M7.5 4 H14.5" stroke="#0E8A0E" stroke-width="2.4"/></svg>
<svg class="a" style="left:991px;top:299px" width="9" height="9" viewBox="0 0 9 9"><path d="M0.8 0.8 L8.2 8.2 M8.2 0.8 L0.8 8.2" stroke="#F00000" stroke-width="2.1"/></svg>
<div class="a" style="left:199px;top:345px;width:755px;height:674px;background:#A4C2EC;"></div>
<div class="a" style="left:199px;top:315px;width:755px;height:30px;background:#fff;"></div>
<div class="a" style="left:198px;top:314px;width:756px;height:1px;background:#707070;"></div>
<div class="a" style="left:198px;top:315px;width:1px;height:704px;background:#D4D4D4;"></div>
<div class="t" style="top:321.50px;height:16px;line-height:16px;font-size:12px;color:#000;left:207px;transform-origin:0 50%;transform:scaleX(0.9768);">Fixed Asset Details - Demo Practice Limited</div>
<div class="a" style="left:934px;top:322px;width:19px;height:19px;background:#C84E4E;"></div>
<svg class="a" style="left:940px;top:328px" width="7" height="7" viewBox="0 0 7 7"><path d="M0.8 0.8 L6.2 6.2 M6.2 0.8 L0.8 6.2" stroke="#fff" stroke-width="1.9"/></svg>
<div class="a" style="left:207px;top:352px;width:738px;height:637px;border:1px solid #DADADA;"></div>
<div class="a" style="left:213px;top:351px;width:8px;height:3px;background:#A4C2EC;"></div>
<div class="t" style="top:363.00px;height:16px;line-height:16px;font-size:12px;color:#000;left:223.5px;transform-origin:0 50%;transform:scaleX(0.8775);">Transaction Site</div>
<div class="t" style="top:384.00px;height:16px;line-height:16px;font-size:12px;color:#000;left:223.5px;transform-origin:0 50%;transform:scaleX(0.8706);">Asset Type</div>
<div class="t" style="top:406.00px;height:16px;line-height:16px;font-size:12px;color:#000;left:223.5px;transform-origin:0 50%;transform:scaleX(0.8492);">Asset Name</div>
<div class="t" style="top:427.50px;height:16px;line-height:16px;font-size:12px;color:#000;left:223.5px;transform-origin:0 50%;transform:scaleX(0.8626);">Asset Ledger</div>
<div class="t" style="top:449.50px;height:16px;line-height:16px;font-size:12px;color:#000;left:223.5px;transform-origin:0 50%;transform:scaleX(0.8507);">Asset Category</div>
<div class="t" style="top:470.50px;height:16px;line-height:16px;font-size:12px;color:#000;left:223.5px;transform-origin:0 50%;transform:scaleX(0.8791);">Depr. Ledger</div>
<div class="t" style="top:491.50px;height:16px;line-height:16px;font-size:12px;color:#000;left:223.5px;transform-origin:0 50%;transform:scaleX(0.8796);">Depreciation Rate</div>
<div class="a" style="left:325px;top:361px;width:192px;height:21px;background:#E5E5E5;border:1px solid #ADADAD;"></div>
<div class="t" style="top:364.00px;height:16px;line-height:16px;font-size:12px;color:#000;left:329.4px;transform-origin:0 50%;transform:scaleX(0.8732);">Demo Site - NZ</div>
<svg class="a" style="left:503.0px;top:368.5px" width="10" height="6" viewBox="0 0 10 6"><path d="M1 1 L5.0 5 L9 1" fill="none" stroke="#404040" stroke-width="1.1"/></svg>
<svg class="a" style="left:325px;top:387px" width="13" height="13" viewBox="0 0 13 13"><circle cx="6.5" cy="6.5" r="6" fill="#fff" stroke="#333" stroke-width="1"/><circle cx="6.5" cy="6.5" r="3.5" fill="#222"/></svg>
<div class="t" style="top:385.50px;height:16px;line-height:16px;font-size:12px;color:#000;left:344.1px;transform-origin:0 50%;transform:scaleX(0.8624);">Standard</div>
<svg class="a" style="left:417px;top:387px" width="13" height="13" viewBox="0 0 13 13"><circle cx="6.5" cy="6.5" r="6" fill="#fff" stroke="#333" stroke-width="1"/></svg>
<div class="t" style="top:385.50px;height:16px;line-height:16px;font-size:12px;color:#000;left:436px;transform-origin:0 50%;transform:scaleX(0.8833);">Instant Write Off</div>
<div class="a" style="left:325px;top:404px;width:192px;height:20px;background:#fff;border:1px solid #7A7A7A;"></div>
<div class="t" style="top:406.00px;height:16px;line-height:16px;font-size:12px;color:#000;left:328.2px;transform-origin:0 50%;transform:scaleX(0.8877);">Heat Pump (Rob) WGPA</div>
<div class="a" style="left:325px;top:426px;width:192px;height:20px;background:#E5E5E5;border:1px solid #ADADAD;"></div>
<div class="t" style="top:428.50px;height:16px;line-height:16px;font-size:12px;color:#000;left:329.4px;transform-origin:0 50%;transform:scaleX(0.8704);">3-1030 Plant and Equipment</div>
<svg class="a" style="left:503.0px;top:433.0px" width="10" height="6" viewBox="0 0 10 6"><path d="M1 1 L5.0 5 L9 1" fill="none" stroke="#404040" stroke-width="1.1"/></svg>
<div class="a" style="left:325px;top:448px;width:192px;height:20px;background:#E5E5E5;border:1px solid #ADADAD;"></div>
<svg class="a" style="left:503.0px;top:455.0px" width="10" height="6" viewBox="0 0 10 6"><path d="M1 1 L5.0 5 L9 1" fill="none" stroke="#404040" stroke-width="1.1"/></svg>
<div class="a" style="left:519px;top:449px;width:18px;height:17px;background:#EFEFEF;border:1px solid #ADADAD;box-shadow:inset 0 0 0 1px #E3E3E3;"></div>
<div class="t" style="top:449.50px;height:16px;line-height:16px;font-size:12px;color:#000;left:227.5px;width:600px;text-align:center;transform-origin:50% 50%;">E</div>
<div class="a" style="left:538px;top:449px;width:18px;height:17px;background:#EFEFEF;border:1px solid #ADADAD;box-shadow:inset 0 0 0 1px #E3E3E3;"></div>
<div class="t" style="top:449.50px;height:16px;line-height:16px;font-size:12px;color:#000;left:246.5px;width:600px;text-align:center;transform-origin:50% 50%;transform:scaleX(0.9225);">N</div>
<div class="a" style="left:325px;top:470px;width:192px;height:19px;background:#F0F0F0;border:1px solid #7A7A7A;"></div>
<div class="t" style="top:471.50px;height:16px;line-height:16px;font-size:12px;color:#000;left:328.2px;transform-origin:0 50%;transform:scaleX(0.8878);">3-1030D - Accumulated Depreciation</div>
<div class="a" style="left:325px;top:491px;width:53px;height:19px;background:#fff;border:1px solid #7A7A7A;"></div>
<div class="t" style="top:492.50px;height:16px;line-height:16px;font-size:12px;color:#000;right:648.8px;transform-origin:100% 50%;transform:scaleX(0.8972);">0</div>
<div class="t" style="top:492.00px;height:16px;line-height:16px;font-size:12px;color:#000;left:388px;transform-origin:0 50%;transform:scaleX(0.6091);">%</div>
<div class="a" style="left:421px;top:490px;width:96px;height:21px;background:#E5E5E5;border:1px solid #ADADAD;"></div>
<div class="t" style="top:493.00px;height:16px;line-height:16px;font-size:12px;color:#000;left:425.4px;transform-origin:0 50%;transform:scaleX(0.8397);">DV</div>
<svg class="a" style="left:503.0px;top:497.5px" width="10" height="6" viewBox="0 0 10 6"><path d="M1 1 L5.0 5 L9 1" fill="none" stroke="#404040" stroke-width="1.1"/></svg>
<div class="t" style="top:363.00px;height:16px;line-height:16px;font-size:12px;color:#000;left:562.6px;transform-origin:0 50%;transform:scaleX(0.8482);">Asset Details</div>
<div class="a" style="left:633px;top:362px;width:306px;height:85px;background:#fff;border:1px solid #7A7A7A;"></div>
<div class="a" style="left:921px;top:364px;width:16px;height:81px;background:#F0F0F0;"></div>
<svg class="a" style="left:924px;top:370px" width="9" height="6" viewBox="0 0 9 6"><path d="M1 5 L4.5 1.5 L8 5" fill="none" stroke="#B0B0B0" stroke-width="1.6"/></svg>
<svg class="a" style="left:924px;top:433px" width="9" height="6" viewBox="0 0 9 6"><path d="M1 1 L4.5 4.5 L8 1" fill="none" stroke="#B0B0B0" stroke-width="1.6"/></svg>
<div class="t" style="top:364.00px;height:16px;line-height:16px;font-size:12px;color:#000;left:636.4px;transform-origin:0 50%;transform:scaleX(0.8847);">Heat pump front Rx room WGPA</div>
<div class="t" style="top:449.50px;height:16px;line-height:16px;font-size:12px;color:#000;left:564px;transform-origin:0 50%;transform:scaleX(0.9047);">Invoice No</div>
<div class="a" style="left:633px;top:448px;width:192px;height:20px;background:#fff;border:1px solid #7A7A7A;"></div>
<div class="t" style="top:450.00px;height:16px;line-height:16px;font-size:12px;color:#000;left:636.2px;transform-origin:0 50%;transform:scaleX(0.8763);">6234</div>
<div class="a" style="left:558px;top:444px;width:272px;height:28px;border:4px solid #FFA94F;"></div>
<div class="t" style="top:470.50px;height:16px;line-height:16px;font-size:12px;color:#000;left:564px;transform-origin:0 50%;transform:scaleX(0.8610);">Serial No</div>
<div class="a" style="left:633px;top:470px;width:192px;height:19px;background:#fff;border:1px solid #7A7A7A;"></div>
<div class="t" style="top:491.50px;height:16px;line-height:16px;font-size:12px;color:#000;left:564px;transform-origin:0 50%;transform:scaleX(0.9098);">Tag No</div>
<div class="a" style="left:633px;top:490px;width:192px;height:20px;background:#fff;border:1px solid #7A7A7A;"></div>
<div class="a" style="left:221px;top:521px;width:13px;height:13px;background:#fff;border:1px solid #333;"></div>
<div class="t" style="top:519.50px;height:16px;line-height:16px;font-size:12px;color:#000;left:240px;transform-origin:0 50%;transform:scaleX(0.8822);">Has this Asset has already been accounted for as an Expense or Manual Journal</div>
<div class="t" style="top:535.50px;height:16px;line-height:16px;font-size:12px;color:#EC1C24;left:242.5px;transform-origin:0 50%;transform:scaleX(0.8829);">Checking this will allow you to enter an Asset that has already been accounted for as an Expense or Manual Journal, without the system</div>
<div class="t" style="top:547.50px;height:16px;line-height:16px;font-size:12px;color:#EC1C24;left:242.5px;transform-origin:0 50%;transform:scaleX(0.8908);">expecting the Asset to be paid off, and without the Ledger values being increased</div>
<div class="t" style="top:597.00px;height:16px;line-height:16px;font-size:12px;color:#000;font-weight:bold;left:221px;transform-origin:0 50%;transform:scaleX(0.9869);text-decoration:underline;">Asset Purchase Details</div>
<div class="t" style="top:597.00px;height:16px;line-height:16px;font-size:12px;color:#000;font-weight:bold;left:574.8px;transform-origin:0 50%;text-decoration:underline;">Asset Sale/Disposal Details</div>
<div class="t" style="top:618.50px;height:16px;line-height:16px;font-size:12px;color:#000;left:221px;transform-origin:0 50%;transform:scaleX(0.8779);">Purchase Date</div>
<div class="t" style="top:639.50px;height:16px;line-height:16px;font-size:12px;color:#000;left:221px;transform-origin:0 50%;transform:scaleX(0.8309);">From Creditor</div>
<div class="t" style="top:661.50px;height:16px;line-height:16px;font-size:12px;color:#000;left:221px;transform-origin:0 50%;transform:scaleX(0.8875);">Tax Code</div>
<div class="t" style="top:682.50px;height:16px;line-height:16px;font-size:12px;color:#000;left:221px;transform-origin:0 50%;transform:scaleX(0.8761);">Purchase Amount</div>
<div class="t" style="top:703.50px;height:16px;line-height:16px;font-size:12px;color:#000;left:221px;transform-origin:0 50%;transform:scaleX(0.8883);">Tax Amount</div>
<div class="t" style="top:724.50px;height:16px;line-height:16px;font-size:12px;color:#000;left:221px;transform-origin:0 50%;transform:scaleX(0.8865);">Total Amount</div>
<div class="t" style="top:746.50px;height:16px;line-height:16px;font-size:12px;color:#000;left:221px;transform-origin:0 50%;transform:scaleX(0.8503);">Depreciate From</div>
<div class="a" style="left:325px;top:616px;width:192px;height:20px;background:#fff;border:1px solid #7A7A7A;"></div>
<div class="t" style="top:617.50px;height:16px;line-height:16px;font-size:12px;color:#000;left:341.6px;transform-origin:0 50%;transform:scaleX(0.7918);">Friday</div>
<div class="t" style="top:617.50px;height:16px;line-height:16px;font-size:12px;color:#000;left:387.3px;transform-origin:0 50%;transform:scaleX(0.8689);">03 September 2021</div>
<svg class="a" style="left:490px;top:621px" width="22" height="12" viewBox="0 0 22 12"><rect x="1.5" y="1.5" width="9" height="10" fill="#D0D0D0"/><rect x="0.5" y="0.5" width="9" height="10" fill="#F4F4F4" stroke="#8A8A8A"/><rect x="0.5" y="0.5" width="9" height="2" fill="#8A8A8A"/><path d="M0.5 5 H9.5 M0.5 7.5 H9.5 M3.5 3 V10.5 M6.5 3 V10.5" stroke="#8A8A8A" stroke-width="0.6"/><path d="M12.5 4 L19.5 4 L16 7.5 Z" fill="#4A6A90"/></svg>
<div class="a" style="left:325px;top:638px;width:192px;height:20px;background:#E5E5E5;border:1px solid #ADADAD;"></div>
<div class="t" style="top:640.50px;height:16px;line-height:16px;font-size:12px;color:#000;left:329.4px;transform-origin:0 50%;transform:scaleX(0.8568);">Heat Pump City</div>
<svg class="a" style="left:503.0px;top:645.0px" width="10" height="6" viewBox="0 0 10 6"><path d="M1 1 L5.0 5 L9 1" fill="none" stroke="#404040" stroke-width="1.1"/></svg>
<div class="a" style="left:519px;top:638px;width:17px;height:18px;background:#EFEFEF;border:1px solid #ADADAD;box-shadow:inset 0 0 0 1px #E3E3E3;"></div>
<div class="t" style="top:639.00px;height:16px;line-height:16px;font-size:12px;color:#000;left:227.0px;width:600px;text-align:center;transform-origin:50% 50%;">E</div>
<div class="a" style="left:538px;top:638px;width:18px;height:18px;background:#EFEFEF;border:1px solid #ADADAD;box-shadow:inset 0 0 0 1px #E3E3E3;"></div>
<div class="t" style="top:639.00px;height:16px;line-height:16px;font-size:12px;color:#000;left:246.5px;width:600px;text-align:center;transform-origin:50% 50%;transform:scaleX(0.9225);">N</div>
<div class="a" style="left:325px;top:659px;width:136px;height:21px;background:#E5E5E5;border:1px solid #ADADAD;"></div>
<div class="t" style="top:662.00px;height:16px;line-height:16px;font-size:12px;color:#000;left:329.4px;transform-origin:0 50%;transform:scaleX(0.8562);">Standard</div>
<svg class="a" style="left:447.0px;top:666.5px" width="10" height="6" viewBox="0 0 10 6"><path d="M1 1 L5.0 5 L9 1" fill="none" stroke="#404040" stroke-width="1.1"/></svg>
<div class="a" style="left:325px;top:681px;width:100px;height:20px;background:#fff;border:1px solid #7A7A7A;"></div>
<div class="t" style="top:683.00px;height:16px;line-height:16px;font-size:12px;color:#000;right:601.8px;transform-origin:100% 50%;transform:scaleX(0.8878);">$3,000.00</div>
<div class="a" style="left:325px;top:702px;width:100px;height:20px;background:#F0F0F0;border:1px solid #7A7A7A;"></div>
<div class="t" style="top:704.00px;height:16px;line-height:16px;font-size:12px;color:#000;right:601.8px;transform-origin:100% 50%;transform:scaleX(0.8527);">$450.00</div>
<div class="a" style="left:325px;top:723px;width:100px;height:20px;background:#fff;border:1px solid #7A7A7A;"></div>
<div class="t" style="top:725.00px;height:16px;line-height:16px;font-size:12px;color:#000;right:601.8px;transform-origin:100% 50%;transform:scaleX(0.8878);">$3,450.00</div>
<div class="a" style="left:325px;top:744px;width:209px;height:20px;background:#fff;border:1px solid #7A7A7A;"></div>
<div class="a" style="left:328px;top:747px;width:13px;height:13px;background:#fff;border:1px solid #3C8CDA;"></div>
<div class="t" style="top:746.50px;height:16px;line-height:16px;font-size:12px;color:#8A8A8A;left:358.2px;transform-origin:0 50%;transform:scaleX(0.8097);">Friday</div>
<div class="t" style="top:746.50px;height:16px;line-height:16px;font-size:12px;color:#8A8A8A;left:403.9px;transform-origin:0 50%;transform:scaleX(0.8717);">03 September 2021</div>
<svg class="a" style="left:507px;top:748px" width="22" height="12" viewBox="0 0 22 12"><rect x="1.5" y="1.5" width="9" height="10" fill="#D0D0D0"/><rect x="0.5" y="0.5" width="9" height="10" fill="#F4F4F4" stroke="#9A9A9A"/><rect x="0.5" y="0.5" width="9" height="2" fill="#9A9A9A"/><path d="M0.5 5 H9.5 M0.5 7.5 H9.5 M3.5 3 V10.5 M6.5 3 V10.5" stroke="#9A9A9A" stroke-width="0.6"/><path d="M12.5 4 L19.5 4 L16 7.5 Z" fill="#4A6A90"/></svg>
<div class="t" style="top:766.00px;height:16px;line-height:16px;font-size:12px;color:#000;left:325.2px;transform-origin:0 50%;transform:scaleX(0.8828);">(set this date if you would like to start depreciating from a date different to the purchase date)</div>
<div class="t" style="top:618.50px;height:16px;line-height:16px;font-size:12px;color:#000;left:575px;transform-origin:0 50%;transform:scaleX(0.8349);">Sale Date</div>
<div class="a" style="left:674px;top:616px;width:209px;height:20px;background:#fff;border:1px solid #7A7A7A;"></div>
<div class="a" style="left:677px;top:619px;width:13px;height:13px;background:#fff;border:1px solid #3C8CDA;"></div>
<div class="t" style="top:618.00px;height:16px;line-height:16px;font-size:12px;color:#8A8A8A;left:707.2px;transform-origin:0 50%;transform:scaleX(0.8097);">Friday</div>
<div class="t" style="top:618.00px;height:16px;line-height:16px;font-size:12px;color:#8A8A8A;left:753px;transform-origin:0 50%;transform:scaleX(0.8717);">03 September 2021</div>
<svg class="a" style="left:856px;top:620px" width="22" height="12" viewBox="0 0 22 12"><rect x="1.5" y="1.5" width="9" height="10" fill="#D0D0D0"/><rect x="0.5" y="0.5" width="9" height="10" fill="#F4F4F4" stroke="#9A9A9A"/><rect x="0.5" y="0.5" width="9" height="2" fill="#9A9A9A"/><path d="M0.5 5 H9.5 M0.5 7.5 H9.5 M3.5 3 V10.5 M6.5 3 V10.5" stroke="#9A9A9A" stroke-width="0.6"/><path d="M12.5 4 L19.5 4 L16 7.5 Z" fill="#4A6A90"/></svg>
<div class="t" style="top:788.00px;height:16px;line-height:16px;font-size:12px;color:#000;font-weight:bold;left:221.2px;transform-origin:0 50%;transform:scaleX(0.9797);">Asset Depreciation</div>
<div class="a" style="left:833px;top:784px;width:105px;height:18px;background:#EFEFEF;border:1px solid #ADADAD;box-shadow:inset 0 0 0 1px #E3E3E3;"></div>
<div class="t" style="top:785.00px;height:16px;line-height:16px;font-size:12px;color:#000;left:585.0px;width:600px;text-align:center;transform-origin:50% 50%;transform:scaleX(0.8798);">Add Depreciation</div>
<div class="a" style="left:221px;top:806px;width:718px;height:154px;background:#fff;border:1px solid #000;"></div>
<div class="a" style="left:222px;top:828px;width:716px;height:1px;background:#A0A0A0;"></div>
<div class="a" style="left:365px;top:807px;width:1px;height:21px;background:#E0E0E0;"></div>
<div class="a" style="left:507px;top:807px;width:1px;height:21px;background:#E0E0E0;"></div>
<div class="a" style="left:557px;top:807px;width:1px;height:21px;background:#E0E0E0;"></div>
<div class="a" style="left:677px;top:807px;width:1px;height:21px;background:#E0E0E0;"></div>
<div class="a" style="left:777px;top:807px;width:1px;height:21px;background:#E0E0E0;"></div>
<div class="a" style="left:897px;top:807px;width:1px;height:21px;background:#E0E0E0;"></div>
<div class="a" style="left:917px;top:807px;width:1px;height:21px;background:#E0E0E0;"></div>
<div class="t" style="top:809.50px;height:16px;line-height:16px;font-size:12px;color:#000;left:231.5px;transform-origin:0 50%;transform:scaleX(0.8314);">Period From</div>
<div class="t" style="top:809.50px;height:16px;line-height:16px;font-size:12px;color:#000;left:373.2px;transform-origin:0 50%;transform:scaleX(0.8908);">PeriodTo</div>
<div class="t" style="top:809.50px;height:16px;line-height:16px;font-size:12px;color:#000;left:514.9px;transform-origin:0 50%;transform:scaleX(0.8664);">Months</div>
<div class="t" style="top:809.50px;height:16px;line-height:16px;font-size:12px;color:#000;left:564.5px;transform-origin:0 50%;transform:scaleX(0.8965);">Opening Book Value</div>
<div class="t" style="top:809.50px;height:16px;line-height:16px;font-size:12px;color:#000;left:685.2px;transform-origin:0 50%;transform:scaleX(0.8772);">Depreciation</div>
<div class="t" style="top:809.50px;height:16px;line-height:16px;font-size:12px;color:#000;left:784.2px;transform-origin:0 50%;transform:scaleX(0.8840);">Closing Book Value</div>
<svg class="a" style="left:353px;top:816px" width="10" height="6" viewBox="0 0 10 6"><path d="M0 0 H9 L4.5 4.5 Z" fill="#A8A8A8"/></svg>
<div class="t" style="top:966.00px;height:16px;line-height:16px;font-size:12px;color:#000;left:223.5px;transform-origin:0 50%;transform:scaleX(0.8786);">Original Book Value</div>
<div class="a" style="left:329px;top:964px;width:107px;height:20px;background:#F0F0F0;border:1px solid #7A7A7A;"></div>
<div class="t" style="top:966.00px;height:16px;line-height:16px;font-size:12px;color:#000;right:590.8px;transform-origin:100% 50%;transform:scaleX(0.8972);">$3,000.00</div>
<div class="t" style="top:966.00px;height:16px;line-height:16px;font-size:12px;color:#000;right:449px;transform-origin:100% 50%;transform:scaleX(0.8815);">Accum. Depreciation</div>
<div class="a" style="left:584px;top:964px;width:107px;height:20px;background:#F0F0F0;border:1px solid #7A7A7A;"></div>
<div class="t" style="top:966.00px;height:16px;line-height:16px;font-size:12px;color:#000;right:335.79999999999995px;transform-origin:100% 50%;transform:scaleX(0.8558);">$0.00</div>
<div class="t" style="top:966.00px;height:16px;line-height:16px;font-size:12px;color:#000;right:201.70000000000005px;transform-origin:100% 50%;transform:scaleX(0.8821);">Current Book Value</div>
<div class="a" style="left:832px;top:964px;width:107px;height:20px;background:#F0F0F0;border:1px solid #7A7A7A;"></div>
<div class="t" style="top:966.00px;height:16px;line-height:16px;font-size:12px;color:#000;right:87.79999999999995px;transform-origin:100% 50%;transform:scaleX(0.8953);">$3,000.00</div>
<div class="a" style="left:362px;top:994px;width:93px;height:21px;background:#EFEFEF;border:1px solid #ADADAD;box-shadow:inset 0 0 0 1px #E3E3E3;"></div>
<div class="t" style="top:996.50px;height:16px;line-height:16px;font-size:12px;color:#000;left:108.0px;width:600px;text-align:center;transform-origin:50% 50%;transform:scaleX(0.8833);">Save and Pay</div>
<div class="a" style="left:463px;top:994px;width:73px;height:21px;background:#EFEFEF;border:1px solid #ADADAD;box-shadow:inset 0 0 0 1px #E3E3E3;"></div>
<div class="t" style="top:996.50px;height:16px;line-height:16px;font-size:12px;color:#000;left:199.0px;width:600px;text-align:center;transform-origin:50% 50%;transform:scaleX(0.8553);">Save</div>
<div class="a" style="left:459px;top:990px;width:81px;height:29px;border:4px solid #FFA94F;"></div>
<div class="a" style="left:607px;top:994px;width:73px;height:21px;background:#EFEFEF;border:1px solid #ADADAD;box-shadow:inset 0 0 0 1px #E3E3E3;"></div>
<div class="t" style="top:996.50px;height:16px;line-height:16px;font-size:12px;color:#000;left:341.6px;width:600px;text-align:center;transform-origin:50% 50%;transform:scaleX(0.8860);">Cancel</div>
<div class="a" style="left:746px;top:312px;width:3px;height:3px;background:#FFA94F;"></div>
</body></html>
